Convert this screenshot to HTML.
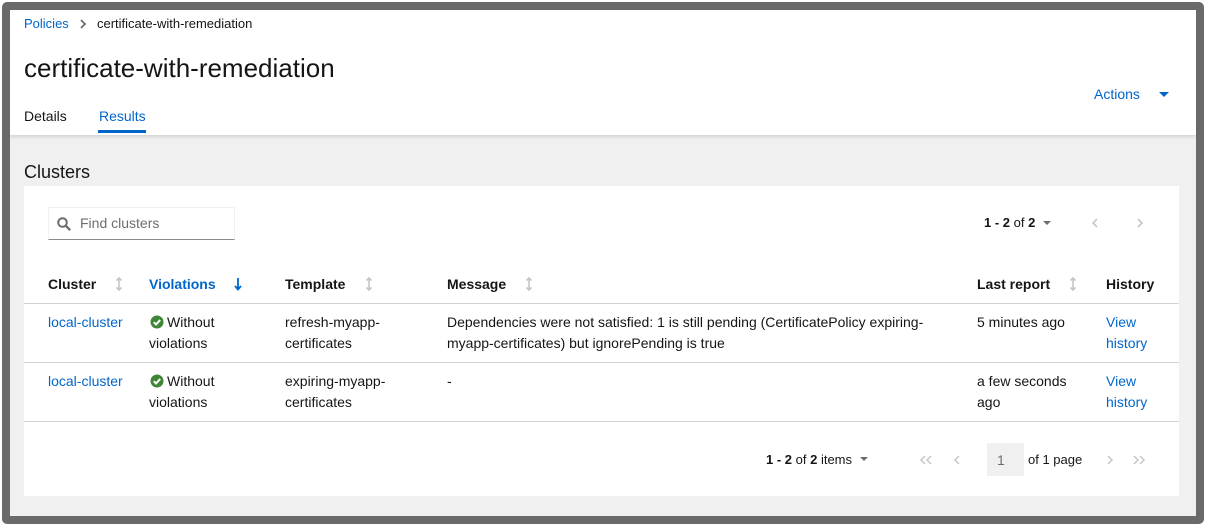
<!DOCTYPE html>
<html><head><meta charset="utf-8"><style>
*{margin:0;padding:0;box-sizing:border-box}
body{width:1208px;height:529px;background:#fff;font-family:"Liberation Sans",sans-serif;color:#151515;position:relative;overflow:hidden;font-size:14px;line-height:20px}
.frame{position:absolute;left:2px;top:2px;width:1202px;height:522px;border:8px solid #6a6a6a;border-radius:5px;background:#f0f0f0;overflow:hidden}
.hdr{position:absolute;left:0;top:0;width:100%;height:125px;background:#fff;box-shadow:0 2px 3px rgba(0,0,0,.12)}
.a{position:absolute;white-space:nowrap}
.blue{color:#0066cc}
.b{font-weight:bold}
.card{position:absolute;left:14px;top:176px;width:1155px;height:310px;background:#fff}
.line{position:absolute;left:0;width:100%;height:1px;background:#d2d2d2}
.g{color:#c7c7c7}
.srt{position:absolute}
</style></head><body>
<div class="frame">
 <div class="hdr">
  <div class="a blue" style="left:14px;top:4px;font-size:13px">Policies</div>
  <svg class="a" style="left:69px;top:9px" width="8" height="10"><path d="M2 1l4 4-4 4" fill="none" stroke="#6a6e73" stroke-width="1.8"/></svg>
  <div class="a" style="left:87px;top:4px;font-size:13px">certificate-with-remediation</div>
  <div class="a" style="left:14px;top:43px;font-size:26px;line-height:30px">certificate-with-remediation</div>
  <div class="a" style="left:14px;top:96px">Details</div>
  <div class="a blue" style="left:89px;top:96px">Results</div>
  <div class="a" style="left:88px;top:120px;width:48px;height:3px;background:#0066cc"></div>
  <div class="a blue" style="left:1084px;top:74px">Actions</div>
  <div class="a" style="left:1149px;top:82px;border-left:5px solid transparent;border-right:5px solid transparent;border-top:5px solid #0066cc"></div>
 </div>
 <div class="a" style="left:14px;top:150px;font-size:18px;line-height:24px">Clusters</div>
 <div class="card">
  <div class="a" style="left:24px;top:21px;width:187px;height:33px;border:1px solid #f0f0f0;border-bottom:1px solid #8a8d90"></div>
  <svg class="a" style="left:33px;top:31px" width="14" height="14" viewBox="0 0 14 14"><circle cx="5.5" cy="5.5" r="4.3" fill="none" stroke="#6a6e73" stroke-width="2"/><line x1="8.7" y1="8.7" x2="12.5" y2="12.5" stroke="#6a6e73" stroke-width="2.3" stroke-linecap="round"/></svg>
  <div class="a" style="left:56px;top:27px;color:#6a6e73">Find clusters</div>
  <div class="a" style="left:960px;top:27px;font-size:13px"><b>1 - 2</b> of <b>2</b></div>
  <div class="a" style="left:1019px;top:35px;border-left:4px solid transparent;border-right:4px solid transparent;border-top:4px solid #6a6e73"></div>
  <svg class="a" style="left:1067px;top:32px" width="8" height="10"><path d="M6 1L2 5l4 4" fill="none" stroke="#c7c7c7" stroke-width="1.6"/></svg>
  <svg class="a" style="left:1112px;top:32px" width="8" height="10"><path d="M2 1l4 4-4 4" fill="none" stroke="#c7c7c7" stroke-width="1.6"/></svg>

  <div class="a b" style="left:24px;top:88px">Cluster</div>
  <svg class="srt" style="left:91px;top:91px" width="8" height="14"><path d="M4 1v12M1.5 3.5L4 1l2.5 2.5M1.5 10.5L4 13l2.5-2.5" fill="none" stroke="#c7c7c7" stroke-width="1.6"/></svg>
  <div class="a b blue" style="left:125px;top:88px">Violations</div>
  <svg class="srt" style="left:210px;top:91px" width="8" height="14"><path d="M4 1v11M1 9l3 3.5L7 9" fill="none" stroke="#0066cc" stroke-width="1.8"/></svg>
  <div class="a b" style="left:261px;top:88px">Template</div>
  <svg class="srt" style="left:341px;top:91px" width="8" height="14"><path d="M4 1v12M1.5 3.5L4 1l2.5 2.5M1.5 10.5L4 13l2.5-2.5" fill="none" stroke="#c7c7c7" stroke-width="1.6"/></svg>
  <div class="a b" style="left:423px;top:88px">Message</div>
  <svg class="srt" style="left:501px;top:91px" width="8" height="14"><path d="M4 1v12M1.5 3.5L4 1l2.5 2.5M1.5 10.5L4 13l2.5-2.5" fill="none" stroke="#c7c7c7" stroke-width="1.6"/></svg>
  <div class="a b" style="left:953px;top:88px">Last report</div>
  <svg class="srt" style="left:1045px;top:91px" width="8" height="14"><path d="M4 1v12M1.5 3.5L4 1l2.5 2.5M1.5 10.5L4 13l2.5-2.5" fill="none" stroke="#c7c7c7" stroke-width="1.6"/></svg>
  <div class="a b" style="left:1082px;top:88px">History</div>
  <div class="line" style="top:117px"></div>

  <div class="a blue" style="left:24px;top:126px">local-cluster</div>
  <svg class="a" style="left:126px;top:129px" width="14" height="14"><circle cx="7" cy="7" r="6.5" fill="#3e8635"/><path d="M3.8 7.2l2.2 2.2 4.2-4.4" fill="none" stroke="#fff" stroke-width="2"/></svg>
  <div class="a" style="left:143px;top:126px">Without</div>
  <div class="a" style="left:125px;top:147px">violations</div>
  <div class="a" style="left:261px;top:126px">refresh-myapp-</div>
  <div class="a" style="left:261px;top:147px">certificates</div>
  <div class="a" style="left:423px;top:126px">Dependencies were not satisfied: 1 is still pending (CertificatePolicy expiring-</div>
  <div class="a" style="left:423px;top:147px">myapp-certificates) but ignorePending is true</div>
  <div class="a" style="left:953px;top:126px">5 minutes ago</div>
  <div class="a blue" style="left:1082px;top:126px">View</div>
  <div class="a blue" style="left:1082px;top:147px">history</div>
  <div class="line" style="top:176px"></div>

  <div class="a blue" style="left:24px;top:185px">local-cluster</div>
  <svg class="a" style="left:126px;top:188px" width="14" height="14"><circle cx="7" cy="7" r="6.5" fill="#3e8635"/><path d="M3.8 7.2l2.2 2.2 4.2-4.4" fill="none" stroke="#fff" stroke-width="2"/></svg>
  <div class="a" style="left:143px;top:185px">Without</div>
  <div class="a" style="left:125px;top:206px">violations</div>
  <div class="a" style="left:261px;top:185px">expiring-myapp-</div>
  <div class="a" style="left:261px;top:206px">certificates</div>
  <div class="a" style="left:423px;top:185px">-</div>
  <div class="a" style="left:953px;top:185px">a few seconds</div>
  <div class="a" style="left:953px;top:206px">ago</div>
  <div class="a blue" style="left:1082px;top:185px">View</div>
  <div class="a blue" style="left:1082px;top:206px">history</div>
  <div class="line" style="top:235px"></div>

  <div class="a" style="left:742px;top:264px;font-size:13px"><b>1 - 2</b> of <b>2</b> items</div>
  <div class="a" style="left:836px;top:271px;border-left:4px solid transparent;border-right:4px solid transparent;border-top:4px solid #6a6e73"></div>
  <svg class="a" style="left:895px;top:269px" width="14" height="10"><path d="M6 1L2 5l4 4M12 1L8 5l4 4" fill="none" stroke="#c7c7c7" stroke-width="1.5"/></svg>
  <svg class="a" style="left:929px;top:269px" width="8" height="10"><path d="M6 1L2 5l4 4" fill="none" stroke="#c7c7c7" stroke-width="1.5"/></svg>
  <div class="a" style="left:963px;top:257px;width:37px;height:33px;background:#f0f0f0"></div>
  <div class="a" style="left:973px;top:264px;color:#6a6e73">1</div>
  <div class="a" style="left:1004px;top:264px;font-size:13px">of 1 page</div>
  <svg class="a" style="left:1082px;top:269px" width="8" height="10"><path d="M2 1l4 4-4 4" fill="none" stroke="#c7c7c7" stroke-width="1.5"/></svg>
  <svg class="a" style="left:1108px;top:269px" width="14" height="10"><path d="M2 1l4 4-4 4M8 1l4 4-4 4" fill="none" stroke="#c7c7c7" stroke-width="1.5"/></svg>
 </div>
</div>
</body></html>
